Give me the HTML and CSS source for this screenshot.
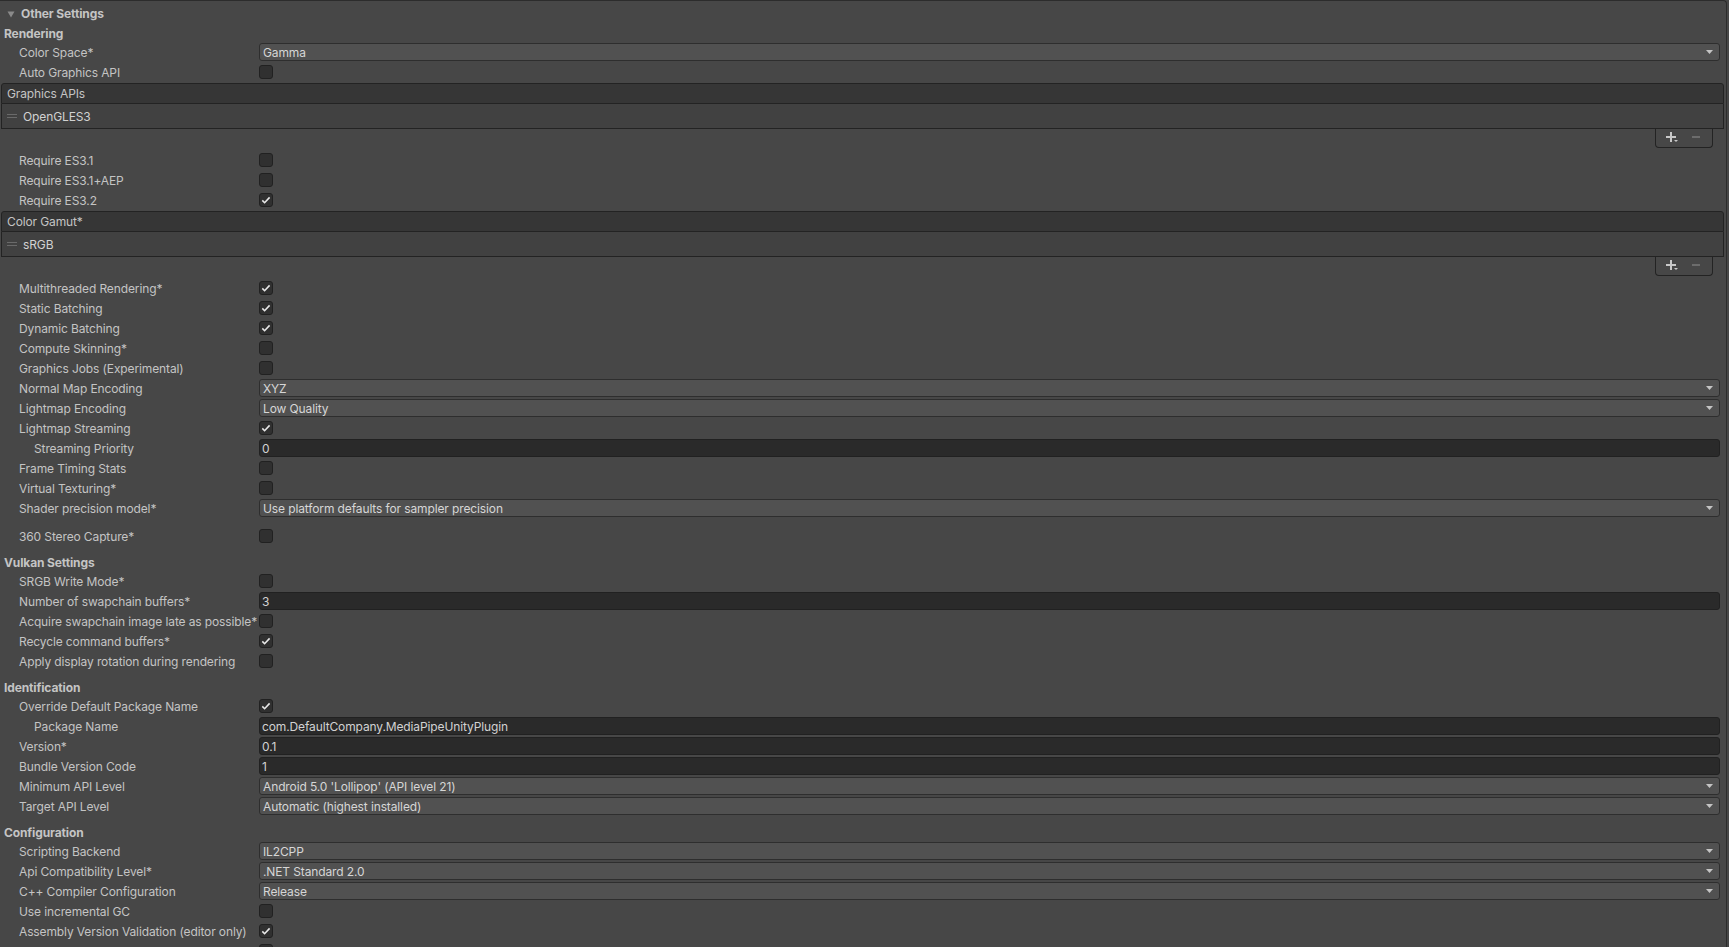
FILE: index.html
```html
<!DOCTYPE html>
<html>
<head>
<meta charset="utf-8">
<link rel="stylesheet" href="styles.css">
</head>
<body>
<div class="panel">
  <div class="foldout"><svg class="tri" width="8" height="7" viewBox="0 0 8 7"><polygon points="0.5,0.5 7.5,0.5 4,6.5" fill="#8a8a8a"/></svg><span>Other Settings</span></div>

  <div class="sec first">Rendering</div>
  <div class="row"><div class="label">Color Space*</div><div class="dd"><span class="v">Gamma</span><svg class="arr" width="7" height="4" viewBox="0 0 7 4"><polygon points="0,0 7,0 3.5,4" fill="#c4c4c4"/></svg></div></div>
  <div class="row"><div class="label">Auto Graphics API</div><div class="cb"></div></div>

  <div class="list">
    <div class="list-h">Graphics APIs</div>
    <div class="list-b"><span class="handle"></span><span class="item">OpenGLES3</span></div>
    <div class="list-f"><svg width="56" height="18" viewBox="0 0 56 18" shape-rendering="crispEdges"><rect x="10" y="7" width="10" height="2" fill="#c8c8c8"/><rect x="14" y="3" width="2" height="10" fill="#c8c8c8"/><polygon points="18,11 22,11 20,13" fill="#c8c8c8" shape-rendering="auto"/><rect x="36" y="7" width="8" height="2" fill="#6c6c6c"/></svg></div>
  </div>

  <div class="row"><div class="label">Require ES3.1</div><div class="cb"></div></div>
  <div class="row"><div class="label">Require ES3.1+AEP</div><div class="cb"></div></div>
  <div class="row"><div class="label">Require ES3.2</div><div class="cb on"><svg width="12" height="12" viewBox="0 0 12 12"><path d="M2.3 6.4 L4.6 8.7 L9.6 3.4" fill="none" stroke="#e8e8e8" stroke-width="1.6"/></svg></div></div>

  <div class="list">
    <div class="list-h">Color Gamut*</div>
    <div class="list-b"><span class="handle"></span><span class="item">sRGB</span></div>
    <div class="list-f"><svg width="56" height="18" viewBox="0 0 56 18" shape-rendering="crispEdges"><rect x="10" y="7" width="10" height="2" fill="#c8c8c8"/><rect x="14" y="3" width="2" height="10" fill="#c8c8c8"/><polygon points="18,11 22,11 20,13" fill="#c8c8c8" shape-rendering="auto"/><rect x="36" y="7" width="8" height="2" fill="#6c6c6c"/></svg></div>
  </div>

  <div class="row"><div class="label">Multithreaded Rendering*</div><div class="cb on"><svg width="12" height="12" viewBox="0 0 12 12"><path d="M2.3 6.4 L4.6 8.7 L9.6 3.4" fill="none" stroke="#e8e8e8" stroke-width="1.6"/></svg></div></div>
  <div class="row"><div class="label">Static Batching</div><div class="cb on"><svg width="12" height="12" viewBox="0 0 12 12"><path d="M2.3 6.4 L4.6 8.7 L9.6 3.4" fill="none" stroke="#e8e8e8" stroke-width="1.6"/></svg></div></div>
  <div class="row"><div class="label">Dynamic Batching</div><div class="cb on"><svg width="12" height="12" viewBox="0 0 12 12"><path d="M2.3 6.4 L4.6 8.7 L9.6 3.4" fill="none" stroke="#e8e8e8" stroke-width="1.6"/></svg></div></div>
  <div class="row"><div class="label">Compute Skinning*</div><div class="cb"></div></div>
  <div class="row"><div class="label">Graphics Jobs (Experimental)</div><div class="cb"></div></div>
  <div class="row"><div class="label">Normal Map Encoding</div><div class="dd"><span class="v">XYZ</span><svg class="arr" width="7" height="4" viewBox="0 0 7 4"><polygon points="0,0 7,0 3.5,4" fill="#c4c4c4"/></svg></div></div>
  <div class="row"><div class="label">Lightmap Encoding</div><div class="dd"><span class="v">Low Quality</span><svg class="arr" width="7" height="4" viewBox="0 0 7 4"><polygon points="0,0 7,0 3.5,4" fill="#c4c4c4"/></svg></div></div>
  <div class="row"><div class="label">Lightmap Streaming</div><div class="cb on"><svg width="12" height="12" viewBox="0 0 12 12"><path d="M2.3 6.4 L4.6 8.7 L9.6 3.4" fill="none" stroke="#e8e8e8" stroke-width="1.6"/></svg></div></div>
  <div class="row"><div class="label ind">Streaming Priority</div><div class="tf">0</div></div>
  <div class="row"><div class="label">Frame Timing Stats</div><div class="cb"></div></div>
  <div class="row"><div class="label">Virtual Texturing*</div><div class="cb"></div></div>
  <div class="row"><div class="label">Shader precision model*</div><div class="dd"><span class="v">Use platform defaults for sampler precision</span><svg class="arr" width="7" height="4" viewBox="0 0 7 4"><polygon points="0,0 7,0 3.5,4" fill="#c4c4c4"/></svg></div></div>
  <div class="gap"></div>
  <div class="row"><div class="label">360 Stereo Capture*</div><div class="cb"></div></div>

  <div class="sec">Vulkan Settings</div>
  <div class="row"><div class="label">SRGB Write Mode*</div><div class="cb"></div></div>
  <div class="row"><div class="label">Number of swapchain buffers*</div><div class="tf">3</div></div>
  <div class="row"><div class="label">Acquire swapchain image late as possible*</div><div class="cb"></div></div>
  <div class="row"><div class="label">Recycle command buffers*</div><div class="cb on"><svg width="12" height="12" viewBox="0 0 12 12"><path d="M2.3 6.4 L4.6 8.7 L9.6 3.4" fill="none" stroke="#e8e8e8" stroke-width="1.6"/></svg></div></div>
  <div class="row"><div class="label">Apply display rotation during rendering</div><div class="cb"></div></div>

  <div class="sec">Identification</div>
  <div class="row"><div class="label">Override Default Package Name</div><div class="cb on"><svg width="12" height="12" viewBox="0 0 12 12"><path d="M2.3 6.4 L4.6 8.7 L9.6 3.4" fill="none" stroke="#e8e8e8" stroke-width="1.6"/></svg></div></div>
  <div class="row"><div class="label ind">Package Name</div><div class="tf">com.DefaultCompany.MediaPipeUnityPlugin</div></div>
  <div class="row"><div class="label">Version*</div><div class="tf">0.1</div></div>
  <div class="row"><div class="label">Bundle Version Code</div><div class="tf">1</div></div>
  <div class="row"><div class="label">Minimum API Level</div><div class="dd"><span class="v">Android 5.0 'Lollipop' (API level 21)</span><svg class="arr" width="7" height="4" viewBox="0 0 7 4"><polygon points="0,0 7,0 3.5,4" fill="#c4c4c4"/></svg></div></div>
  <div class="row"><div class="label">Target API Level</div><div class="dd"><span class="v">Automatic (highest installed)</span><svg class="arr" width="7" height="4" viewBox="0 0 7 4"><polygon points="0,0 7,0 3.5,4" fill="#c4c4c4"/></svg></div></div>

  <div class="sec">Configuration</div>
  <div class="row"><div class="label">Scripting Backend</div><div class="dd"><span class="v">IL2CPP</span><svg class="arr" width="7" height="4" viewBox="0 0 7 4"><polygon points="0,0 7,0 3.5,4" fill="#c4c4c4"/></svg></div></div>
  <div class="row"><div class="label">Api Compatibility Level*</div><div class="dd"><span class="v">.NET Standard 2.0</span><svg class="arr" width="7" height="4" viewBox="0 0 7 4"><polygon points="0,0 7,0 3.5,4" fill="#c4c4c4"/></svg></div></div>
  <div class="row"><div class="label">C++ Compiler Configuration</div><div class="dd"><span class="v">Release</span><svg class="arr" width="7" height="4" viewBox="0 0 7 4"><polygon points="0,0 7,0 3.5,4" fill="#c4c4c4"/></svg></div></div>
  <div class="row"><div class="label">Use incremental GC</div><div class="cb"></div></div>
  <div class="row"><div class="label">Assembly Version Validation (editor only)</div><div class="cb on"><svg width="12" height="12" viewBox="0 0 12 12"><path d="M2.3 6.4 L4.6 8.7 L9.6 3.4" fill="none" stroke="#e8e8e8" stroke-width="1.6"/></svg></div></div>
  <div class="row"><div class="label"></div><div class="cb"></div></div>
</div>
</body>
</html>
```

FILE: styles.css
```css
html, body {
  margin: 0;
  padding: 0;
}
body {
  background: #474747;
  font-family: Inter, "Noto Sans", sans-serif;
  font-size: 12px;
  letter-spacing: -0.12px;
  color: #c4c4c4;
  height: 947px;
  overflow: hidden;
}
.panel {
  width: 1727px;
  height: 960px;
  box-sizing: border-box;
  border-top: 1px solid #2c2c2c;
  border-right: 1px solid #2c2c2c;
  border-top-right-radius: 4px;
}
.foldout {
  height: 21px;
  box-sizing: border-box;
  padding-top: 4px;
  padding-left: 7px;
  line-height: 18px;
  font-weight: 700;
  display: flex;
  align-items: flex-start;
}
.foldout .tri {
  margin-top: 6px;
  margin-right: 6px;
  flex: none;
}
.sec {
  margin-top: 5px;
  height: 20px;
  line-height: 23px;
  padding-left: 4px;
  font-weight: 700;
}
.sec.first {
  margin-top: 0;
}
.row {
  display: flex;
  align-items: flex-start;
  height: 20px;
}
.label {
  width: 259px;
  flex: none;
  box-sizing: border-box;
  padding-left: 19px;
  line-height: 21px;
  white-space: nowrap;
}
.label.ind {
  padding-left: 34px;
}
.dd {
  flex: 1;
  display: flex;
  align-items: center;
  height: 18px;
  margin: 1px 6px 0 0;
  box-sizing: border-box;
  border: 1px solid #2e2e2e;
  border-radius: 3px;
  background: #515151;
  color: #d6d6d6;
  padding-left: 3px;
  line-height: 16px;
}
.dd .v {
  flex: 1;
  white-space: nowrap;
  padding-top: 1px;
}
.dd .arr {
  flex: none;
  margin-right: 6px;
}
.tf {
  flex: 1;
  height: 18px;
  margin: 1px 6px 0 0;
  box-sizing: border-box;
  border: 1px solid #212121;
  border-radius: 3px;
  background: #2a2a2a;
  color: #d2d2d2;
  padding-left: 2px;
  line-height: 17px;
  white-space: nowrap;
}
.cb {
  width: 14px;
  height: 14px;
  margin-top: 3px;
  box-sizing: border-box;
  border: 1px solid #212121;
  border-radius: 3px;
  background: #303030;
  flex: none;
}
.cb svg {
  display: block;
}
.gap {
  height: 8px;
}
.list {
  display: flex;
  flex-direction: column;
  margin: 1px 2px 2px 1px;
}
.list-h {
  height: 21px;
  box-sizing: border-box;
  border: 1px solid #232323;
  border-radius: 3px 3px 0 0;
  background: #363636;
  padding-left: 5px;
  line-height: 20px;
}
.list-b {
  height: 25px;
  box-sizing: border-box;
  border: 1px solid #232323;
  border-top: 0;
  background: #414141;
  display: flex;
  align-items: center;
}
.handle {
  width: 10px;
  height: 4px;
  margin-left: 5px;
  margin-right: 6px;
  box-sizing: border-box;
  border-top: 1px solid #6a6a6a;
  border-bottom: 1px solid #6a6a6a;
  flex: none;
}
.item {
  line-height: 16px;
  padding-top: 2px;
  color: #d2d2d2;
}
.list-f {
  align-self: flex-end;
  margin-right: 11px;
  width: 58px;
  height: 19px;
  box-sizing: border-box;
  border: 1px solid #232323;
  border-top: 0;
  border-radius: 0 0 4px 4px;
  background: #474747;
}
.list-f svg {
  display: block;
}
```
